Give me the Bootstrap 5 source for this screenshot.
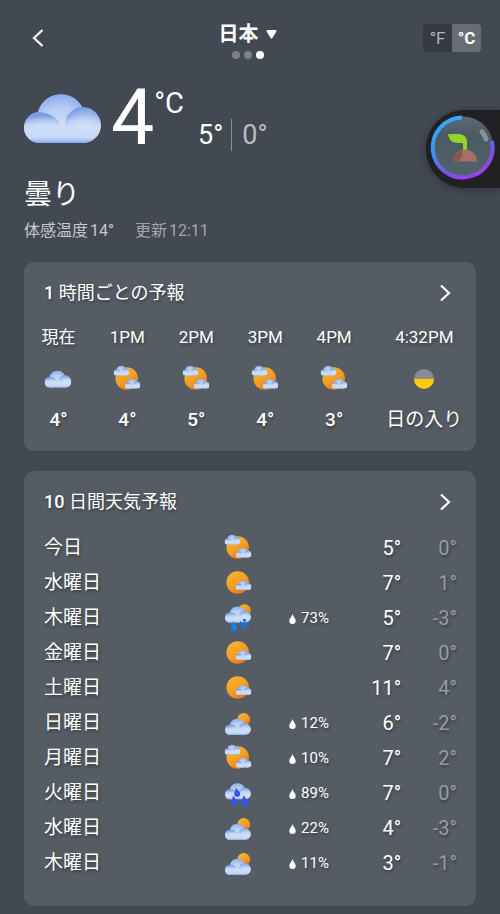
<!DOCTYPE html>
<html lang="ja">
<head>
<meta charset="utf-8">
<meta name="viewport" content="width=device-width, initial-scale=1">
<title>日本の天気</title>
<link href="https://cdn.jsdelivr.net/npm/bootstrap@5.3.0/dist/css/bootstrap.min.css" rel="stylesheet">
<style>
  body { background: #434953; color: #fff; font-family: Roboto, "Noto Sans CJK JP", sans-serif; line-height: 1.2; }
  button { font-family: inherit; }
  .plain { background: none; border: 0; padding: 0; color: inherit; line-height: 1; }
  .top-bar { display: grid; grid-template-columns: 1fr auto 1fr; align-items: start; padding: 22px 19px 0 14px; }
  .back-btn { width: 28px; height: 32px; margin-left: 10px; }
  .place { font-size: 20px; font-weight: 700; line-height: 24px; gap: 7px; }
  .dots { gap: 4px; margin-top: 5px; }
  .dots span { width: 8px; height: 8px; border-radius: 50%; background: #7c8088; }
  .dots .on { background: #fff; }
  .units { border-radius: 4px; overflow: hidden; margin-top: 2px; }
  .units button { width: 29px; height: 28px; border: 0; padding: 0; font-size: 17px; background: #363a43; color: #b4b6ba; }
  .units .on { background: #686c75; color: #fff; font-weight: 700; }
  .now { padding: 0 24px; margin: 23px 0 20px; }
  .big-cloud { width: 77px; height: 49px; margin-top: 12px; }
  .degree { font-size: 77px; line-height: 72px; margin-left: 10px; }
  .unit { font-size: 29px; line-height: 32px; margin-top: 5px; }
  .range { font-size: 27px; line-height: 32px; margin: 37px 0 0 14px; }
  .range .low { color: #b9bbbf; border-left: 1px solid #8a8e95; padding-left: 10px; margin-left: 8px; }
  .sky { font-size: 28px; line-height: 36px; margin: 23px 0 0; font-weight: 400; }
  .notes { font-size: 16px; line-height: 22px; margin: 7px 0 0; gap: 21px; color: #c7c8cb; }
  .notes > span { display: flex; gap: 2px; }
  .notes .dim { color: #a3a5aa; }
  .panel { background: #555c64; border-radius: 10px; margin: 0 24px 20px; text-shadow: 1px 2px 3px rgba(0,0,0,.35); }
  .panel h2 { font-size: 18px; line-height: 24px; margin: 0; font-weight: 400; }
  .panel h2 b { font-weight: 500; }
  .panel-head { padding: 19px 25px 0 20px; }
  table { width: 100%; table-layout: fixed; }
  th, td { padding: 0; font-weight: 400; }
  svg { display: block; }
  .hours { text-align: center; margin: 20px 0 0; }
  .hours-wrap { padding-bottom: 19px; }
  .hours th { font-size: 17px; line-height: 24px; }
  .hours td { font-size: 19px; line-height: 24px; vertical-align: middle; }
  .hours .icons { height: 59px; }
  .hours td svg { width: 28px; height: 28px; margin: 0 auto; }
  .hours .num { font-weight: 500; }
  .hours th:last-child, .hours td:last-child { padding-left: 4px; }
  .days-wrap { padding: 16px 19px 26px 20px; }
  .days tr { height: 35px; }
  .days th { font-size: 19px; line-height: 28px; }
  .days td { font-size: 20px; line-height: 28px; text-align: right; vertical-align: middle; }
  .days td svg { width: 28px; height: 28px; }
  .days .rain { font-size: 15px; }
  .days .rain svg { display: inline-block; width: 7px; height: 10px; margin-right: 5px; vertical-align: -1px; }
  .days .lo { color: #979ba1; }
  .helper { position: absolute; right: 0; top: 110px; width: 74px; height: 78px; border-radius: 39px 0 0 39px; background: #212123; box-shadow: 0 2px 10px rgba(0,0,0,.3); }
</style>
<script src="https://cdn.jsdelivr.net/npm/bootstrap@5.3.0/dist/js/bootstrap.bundle.min.js"></script>
</head>
<body>
<svg width="0" height="0" class="position-absolute" aria-hidden="true">
  <defs>
    <clipPath id="cloudShape"><circle cx="37" cy="24" r="24"/><circle cx="15.5" cy="33.5" r="15.5"/><circle cx="59" cy="31" r="18"/><rect x="15" y="32" width="45" height="17"/></clipPath>
    <radialGradient id="lobeTop" cx=".5" cy=".8" r=".85"><stop offset=".15" stop-color="#cddcf3"/><stop offset=".6" stop-color="#b8cef5"/><stop offset="1" stop-color="#7fa2ea"/></radialGradient>
    <radialGradient id="lobeRight" cx=".55" cy=".75" r=".8"><stop offset=".3" stop-color="#cfdff5"/><stop offset=".65" stop-color="#a9c2ef"/><stop offset="1" stop-color="#6b8fdf"/></radialGradient>
    <radialGradient id="lobeLeft" cx=".6" cy="1" r=".9"><stop offset=".3" stop-color="#c9daf3"/><stop offset=".7" stop-color="#b3caf1"/><stop offset="1" stop-color="#7a9de5"/></radialGradient>
    <linearGradient id="cloudBase" x1="0" y1="0" x2="0" y2="1"><stop offset="0" stop-color="#cfdff5" stop-opacity="0"/><stop offset=".4" stop-color="#cfdff5" stop-opacity=".85"/><stop offset=".8" stop-color="#c6d9f8"/><stop offset="1" stop-color="#88aaee"/></linearGradient>
    <linearGradient id="sunFill" x1=".15" y1=".1" x2=".75" y2="1"><stop offset="0" stop-color="#f5b62f"/><stop offset=".55" stop-color="#f39a22"/><stop offset="1" stop-color="#ee6c10"/></linearGradient>
    <linearGradient id="ring" x1=".2" y1="0" x2=".7" y2="1"><stop offset="0" stop-color="#2fb0f5"/><stop offset=".4" stop-color="#3f8df0"/><stop offset=".75" stop-color="#7a50e8"/><stop offset="1" stop-color="#9a41ee"/></linearGradient>
    <linearGradient id="glass" x1="0" y1="0" x2="0" y2="1"><stop offset="0" stop-color="#5c6a7b"/><stop offset=".3" stop-color="#4c5961"/><stop offset="1" stop-color="#51646a"/></linearGradient>
  </defs>
  <symbol id="cloud" viewBox="0 0 77 49">
    <g clip-path="url(#cloudShape)">
      <circle cx="37" cy="24" r="24" fill="url(#lobeTop)"/>
      <rect x="15" y="30" width="45" height="19" fill="#c9daf3"/>
      <path d="M0 49V18H15.500Q28 18.500 36 29L26 49Z" fill="url(#lobeLeft)"/>
      <circle cx="59" cy="31" r="18" fill="url(#lobeRight)"/>
      <rect y="22" width="77" height="27" fill="url(#cloudBase)"/>
    </g>
  </symbol>
  <symbol id="overcast" viewBox="0 0 28 28"><use href="#cloud" x="0.500" y="5.500" width="27" height="17.200"/></symbol>
  <symbol id="mixed" viewBox="0 0 28 28"><circle cx="13.700" cy="13.500" r="11.300" fill="url(#sunFill)"/><use href="#cloud" x="0.500" y="0.500" width="16" height="10.200"/><use href="#cloud" x="11.500" y="13.500" width="16" height="10.200"/></symbol>
  <symbol id="sunny" viewBox="0 0 28 28"><circle cx="13.700" cy="13.500" r="11.300" fill="url(#sunFill)"/><use href="#cloud" x="11.500" y="11" width="16" height="10.200"/></symbol>
  <symbol id="cloudy" viewBox="0 0 28 28"><circle cx="19.700" cy="10.500" r="6.500" fill="url(#sunFill)"/><use href="#cloud" x="1" y="9.500" width="26" height="16.500"/></symbol>
  <symbol id="drop" viewBox="0 0 7 10"><path d="M2.200 0C1.600 3 .2 4.600.2 6.700A3.300 3.300 0 0 0 6.800 6.700C6.800 4.500 3.500 3 2.200 0Z"/></symbol>
  <symbol id="sleet" viewBox="0 0 28 28"><circle cx="20.500" cy="6.500" r="6.300" fill="url(#sunFill)"/><use href="#cloud" x="1" y="2" width="26" height="17"/><use href="#drop" x="6.500" y="17" width="7" height="10" fill="#1c7fee"/>
    <path d="M20.500 15V26M16 18L25 23M25 18L16 23M19 15.500L20.500 17L22 15.500M19 25.500L20.500 24L22 25.500" stroke="#1c74de" stroke-width="1.500" fill="none"/></symbol>
  <symbol id="rainy" viewBox="0 0 28 28"><use href="#cloud" x="1" y="4" width="26" height="16.500"/><g fill="#3557ea"><use href="#drop" x="10" y="8.500" width="6.500" height="9.500"/><use href="#drop" x="7" y="16.500" width="7" height="10"/><use href="#drop" x="17" y="16" width="8" height="11.500"/></g></symbol>
  <symbol id="sunset" viewBox="0 0 28 28"><path d="M4 14A10 10 0 0 1 24 14Z" fill="#8a8c95"/><path d="M4 14A10 10 0 0 0 24 14Z" fill="#ffc90d"/></symbol>
  <symbol id="next" viewBox="0 0 12 18"><path d="M2 1.500L10 9L2 16.500" fill="none" stroke="#fff" stroke-width="2.200"/></symbol>
  <symbol id="wet" viewBox="0 0 7 10"><path d="M3.500 0C3 2.500.3 4.500.3 6.700A3.200 3.200 0 0 0 6.700 6.700C6.700 4.500 4 2.500 3.500 0Z" fill="#fff"/></symbol>
</svg>

<header class="top-bar">
  <button class="plain back-btn d-flex align-items-center justify-content-center" aria-label="戻る"><svg width="12" height="20" viewBox="0 0 12 20"><path d="M10.500 2L2 10L10.500 18" fill="none" stroke="#fff" stroke-width="2.200"/></svg></button>
  <div class="d-flex flex-column align-items-center">
    <button class="plain place d-flex align-items-center">日本<svg width="11" height="9" viewBox="0 0 11 9"><path d="M1.500 1H9.500L5.500 7.500Z" fill="#fff" stroke="#fff" stroke-width="2" stroke-linejoin="round"/></svg></button>
    <div class="dots d-flex"><span></span><span></span><span class="on"></span></div>
  </div>
  <div class="units d-flex ms-auto"><button>°F</button><button class="on">°C</button></div>
</header>

<main>
  <section class="now">
    <div class="d-flex align-items-start">
      <svg class="big-cloud"><use href="#cloud"/></svg>
      <div class="degree">4</div><div class="unit">°C</div>
      <div class="range d-flex"><span>5°</span><span class="low">0°</span></div>
    </div>
    <h1 class="sky">曇り</h1>
    <p class="notes d-flex"><span>体感温度 <span>14°</span></span><span class="dim">更新 <span>12:11</span></span></p>
  </section>

  <section class="panel" aria-label="時間予報">
    <div class="panel-head d-flex justify-content-between align-items-center">
      <h2><b>1</b> 時間ごとの予報</h2>
      <a href="#hourly" aria-label="時間予報の詳細"><svg width="12" height="18"><use href="#next"/></svg></a>
    </div>
    <div class="hours-wrap">
    <table class="hours" id="hourly">
      <colgroup><col span="5" style="width:15.25%"><col></colgroup>
      <thead><tr><th>現在</th><th>1PM</th><th>2PM</th><th>3PM</th><th>4PM</th><th>4:32PM</th></tr></thead>
      <tbody>
        <tr class="icons"><td><svg><use href="#overcast"/></svg></td><td><svg><use href="#mixed"/></svg></td><td><svg><use href="#mixed"/></svg></td><td><svg><use href="#mixed"/></svg></td><td><svg><use href="#mixed"/></svg></td><td><svg><use href="#sunset"/></svg></td></tr>
        <tr><td class="num">4°</td><td class="num">4°</td><td class="num">5°</td><td class="num">4°</td><td class="num">3°</td><td>日の入り</td></tr>
      </tbody>
    </table>
    </div>
  </section>

  <section class="panel mb-2" aria-label="日間予報">
    <div class="panel-head d-flex justify-content-between align-items-center">
      <h2><b>10</b> 日間天気予報</h2>
      <a href="#daily" aria-label="日間予報の詳細"><svg width="12" height="18"><use href="#next"/></svg></a>
    </div>
    <div class="days-wrap">
    <table class="days" id="daily">
      <colgroup><col style="width:43.5%"><col style="width:7%"><col style="width:18.5%"><col style="width:17.5%"><col></colgroup>
      <tbody>
        <tr><th>今日</th><td><svg><use href="#mixed"/></svg></td><td class="rain"></td><td>5°</td><td class="lo">0°</td></tr>
        <tr><th>水曜日</th><td><svg><use href="#sunny"/></svg></td><td class="rain"></td><td>7°</td><td class="lo">1°</td></tr>
        <tr><th>木曜日</th><td><svg><use href="#sleet"/></svg></td><td class="rain"><svg><use href="#wet"/></svg>73%</td><td>5°</td><td class="lo">-3°</td></tr>
        <tr><th>金曜日</th><td><svg><use href="#sunny"/></svg></td><td class="rain"></td><td>7°</td><td class="lo">0°</td></tr>
        <tr><th>土曜日</th><td><svg><use href="#sunny"/></svg></td><td class="rain"></td><td>11°</td><td class="lo">4°</td></tr>
        <tr><th>日曜日</th><td><svg><use href="#cloudy"/></svg></td><td class="rain"><svg><use href="#wet"/></svg>12%</td><td>6°</td><td class="lo">-2°</td></tr>
        <tr><th>月曜日</th><td><svg><use href="#mixed"/></svg></td><td class="rain"><svg><use href="#wet"/></svg>10%</td><td>7°</td><td class="lo">2°</td></tr>
        <tr><th>火曜日</th><td><svg><use href="#rainy"/></svg></td><td class="rain"><svg><use href="#wet"/></svg>89%</td><td>7°</td><td class="lo">0°</td></tr>
        <tr><th>水曜日</th><td><svg><use href="#cloudy"/></svg></td><td class="rain"><svg><use href="#wet"/></svg>22%</td><td>4°</td><td class="lo">-3°</td></tr>
        <tr><th>木曜日</th><td><svg><use href="#cloudy"/></svg></td><td class="rain"><svg><use href="#wet"/></svg>11%</td><td>3°</td><td class="lo">-1°</td></tr>
      </tbody>
    </table>
    </div>
  </section>
</main>

<button class="plain helper" aria-label="育成アシスタント">
  <svg width="74" height="78" viewBox="0 0 74 78">
    <path d="M39 0H74V78H39A39 39 0 0 1 39 0Z" fill="#212123"/>
    <circle cx="36.500" cy="37.500" r="31" fill="url(#glass)"/>
    <path d="M36 7.500A30 30 0 1 0 66 31" fill="none" stroke="url(#ring)" stroke-width="4"/>
    <path d="M56 22Q59 25 60 29" fill="none" stroke="#87919a" stroke-width="5" stroke-linecap="round"/>
    <path d="M22 24H34Q41 25 41 32V41H37V33H32Q23 33 22 24Z" fill="#8fd52e"/>
    <path d="M27 51.500A12 12 0 0 1 51 51.500Z" fill="#a86f66"/>
    <path d="M27 51.500A12 12 0 0 1 36 40.500Q38 46 32 51.500Z" fill="#8c5349"/>
  </svg>
</button>
</body>
</html>
